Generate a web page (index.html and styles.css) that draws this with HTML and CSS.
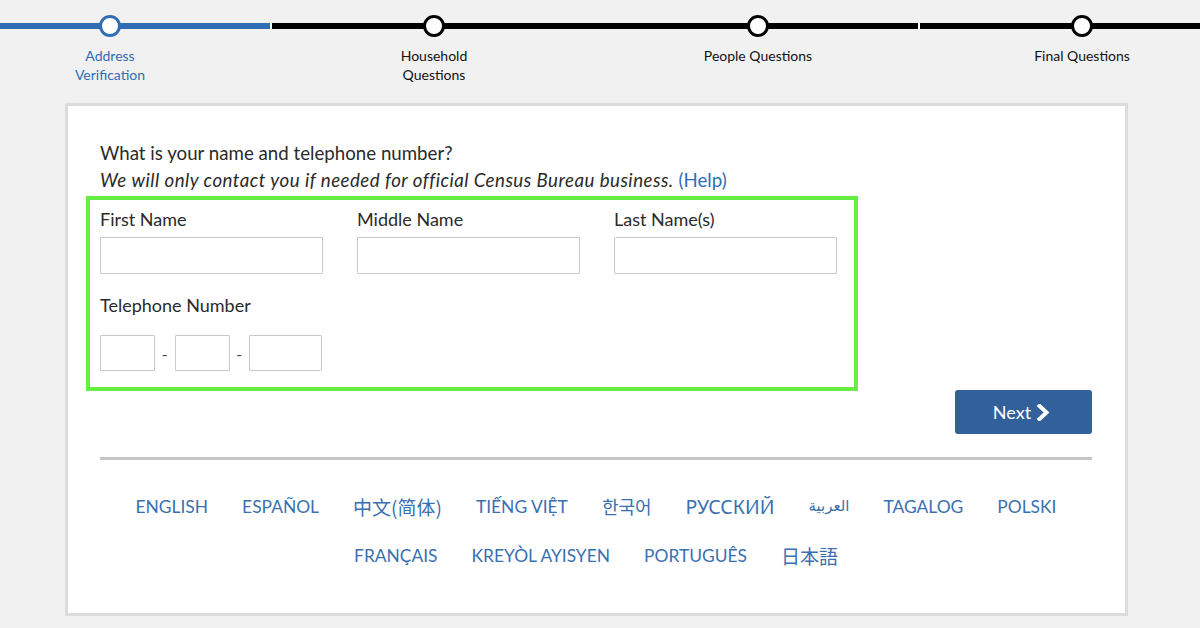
FILE: index.html
```html
<!DOCTYPE html>
<html lang="en">
<head>
<meta charset="utf-8">
<title>Census - Name and Telephone</title>
<link rel="stylesheet" href="styles.css">
</head>
<body>
<div class="progress">
  <div class="track">
    <div class="seg seg-blue"></div>
    <div class="seg seg-black seg-mid"></div>
    <div class="seg seg-black seg-last"></div>
  </div>
  <div class="steps">
    <div class="step active"><span class="dot"></span><span class="step-label">Address Verification</span></div>
    <div class="step"><span class="dot"></span><span class="step-label">Household Questions</span></div>
    <div class="step"><span class="dot"></span><span class="step-label">People Questions</span></div>
    <div class="step"><span class="dot"></span><span class="step-label">Final Questions</span></div>
  </div>
</div>

<main class="card">
  <p class="question">What is your name and telephone number?</p>
  <p class="hint"><em>We will only contact you if needed for official Census Bureau business.</em> <a class="help" href="#">(Help)</a></p>

  <div class="highlight">
    <div class="name-row">
      <label class="field"><span class="field-label">First Name</span><input class="text-input" type="text"></label>
      <label class="field"><span class="field-label">Middle Name</span><input class="text-input" type="text"></label>
      <label class="field"><span class="field-label">Last Name(s)</span><input class="text-input" type="text"></label>
    </div>
    <div class="phone">
      <span class="field-label">Telephone Number</span>
      <div class="phone-row">
        <input class="text-input phone-a" type="text">
        <span class="dash">-</span>
        <input class="text-input phone-b" type="text">
        <span class="dash">-</span>
        <input class="text-input phone-c" type="text">
      </div>
    </div>
  </div>

  <div class="actions">
    <button class="next" type="button">Next
      <svg class="chev" width="14" height="17" viewBox="0 0 14 17" aria-hidden="true"><path d="M3.5 2 L10.5 8.5 L3.5 15" fill="none" stroke="#fff" stroke-width="4" stroke-linejoin="miter" stroke-linecap="square"/></svg>
    </button>
  </div>

  <hr class="divider">

  <nav class="langs">
    <a href="#">ENGLISH</a>
    <a href="#">ESPAÑOL</a>
    <a href="#" class="zh">中文(简体)</a>
    <a href="#">TIẾNG VIỆT</a>
    <a href="#" class="ko">한국어</a>
    <a href="#" class="ru">РУССКИЙ</a>
    <a href="#" class="ar">العربية</a>
    <a href="#">TAGALOG</a>
    <a href="#">POLSKI</a>
    <a href="#">FRANÇAIS</a>
    <a href="#">KREYÒL AYISYEN</a>
    <a href="#">PORTUGUÊS</a>
    <a href="#" class="ja">日本語</a>
  </nav>
</main>
</body>
</html>
```

FILE: styles.css
```css
* { box-sizing: border-box; }

html, body {
  margin: 0;
  padding: 0;
  background: #f1f1f1;
  font-family: "Lato", "Noto Sans", "Noto Sans CJK SC", sans-serif;
  color: #222;
}

.progress {
  display: grid;
  height: 103px;
  overflow: hidden;
}

.track, .steps { grid-area: 1 / 1; }

.track {
  display: flex;
  margin-top: 23px;
  height: 6px;
  gap: 2px;
  background: #fff;
}

.seg { height: 6px; }
.seg-blue { width: 270px; background: #2f6db5; }
.seg-black { background: #000; }
.seg-mid { width: 646px; }
.seg-last { flex: 1; }

.steps {
  display: grid;
  grid-template-columns: repeat(4, 324px);
  margin-left: -52px;
  margin-top: 15px;
}

.step {
  display: flex;
  flex-direction: column;
  align-items: center;
}

.dot {
  width: 22px;
  height: 22px;
  border-radius: 50%;
  background: #fff;
  border: 3px solid #000;
}

.step.active .dot { border-color: #2f6db5; }

.step-label {
  margin-top: 9px;
  max-width: 118px;
  text-align: center;
  font-size: 14px;
  line-height: 19px;
  color: #111;
}

.step.active .step-label { color: #2f6db5; }

.card {
  margin-left: 65px;
  width: 1063px;
  background: #fff;
  border: 3px solid #dcdcdc;
  padding: 34px 33px 44px 32px;
}

.question, .hint {
  margin: 0;
  font-size: 18.7px;
  line-height: 27px;
  color: #2a2a2a;
}

.hint em {
  letter-spacing: 0.48px;
}

.help {
  color: #2f6db5;
  text-decoration: none;
}

.highlight {
  margin: 2px 0 0 -14px;
  width: 772px;
  border: 4px solid #66ee44;
  padding: 6px 18px 16px 10px;
}

.name-row {
  display: grid;
  grid-template-columns: repeat(3, 223px);
  column-gap: 34px;
}

.field { display: flex; flex-direction: column; }

.field-label {
  font-size: 18px;
  line-height: 27px;
  color: #2a2a2a;
  display: block;
}

.text-input {
  display: block;
  margin: 4px 0 0;
  height: 37px;
  border: 1px solid #c8c8c8;
  border-radius: 1px;
  background: #fff;
  padding: 0 6px;
  font: inherit;
}

.field .text-input { width: 223px; }

.phone { margin-top: 18px; }

.phone-row {
  display: flex;
  align-items: center;
  margin-top: 16px;
}

.phone-row .text-input { margin: 0; height: 36px; }
.phone-a, .phone-b { width: 55px; }
.phone-c { width: 73px; }

.dash {
  width: 19.5px;
  text-align: center;
  font-size: 16px;
  color: #444;
}

.actions {
  display: flex;
  justify-content: flex-end;
}

.next {
  width: 137px;
  height: 44px;
  margin-top: -1px;
  border: none;
  border-radius: 3px;
  background: #31609a;
  color: #fff;
  font-family: inherit;
  font-size: 18px;
  display: flex;
  align-items: center;
  justify-content: center;
  gap: 5px;
  padding: 0 4px 0 0;
}

.chev { display: block; }

.divider {
  margin: 23px 0 0;
  border: none;
  height: 3px;
  background: #c6c6c6;
}

.langs {
  display: flex;
  flex-wrap: wrap;
  justify-content: center;
  align-items: center;
  column-gap: 34px;
  row-gap: 22px;
  padding: 33px 0 0;
}

.langs a {
  font-size: 17.4px;
  line-height: 27px;
  height: 27px;
  color: #3a70b0;
  text-decoration: none;
}

.langs .zh { font-family: "Noto Sans CJK SC", sans-serif; font-size: 19px; }
.langs .ko { font-family: "Noto Sans CJK KR", sans-serif; font-size: 18px; }
.langs .ja { font-family: "Noto Sans CJK JP", sans-serif; font-size: 19px; }
.langs .ru { font-family: "Noto Sans", sans-serif; font-size: 19.5px; font-weight: 400; }
.langs .ar { font-family: "DejaVu Sans", sans-serif; font-size: 15px; }
```
